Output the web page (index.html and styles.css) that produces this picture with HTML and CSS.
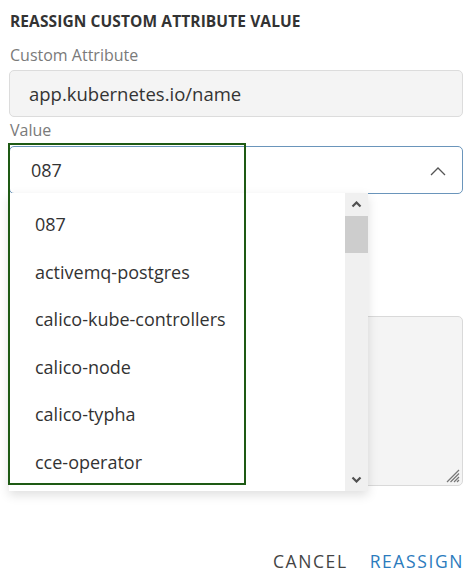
FILE: index.html
```html
<!DOCTYPE html>
<html>
<head>
<meta charset="utf-8">
<link rel="stylesheet" href="styles.css">
</head>
<body>
<div class="dialog">
  <h2 class="title">REASSIGN CUSTOM ATTRIBUTE VALUE</h2>
  <div class="field">
    <label class="label">Custom Attribute</label>
    <div class="input">app.kubernetes.io/name</div>
  </div>
  <div class="field field-value">
    <label class="label">Value</label>
    <div class="select">
      <span>087</span>
      <svg class="chev" width="16" height="10" viewBox="0 0 16 10"><polyline points="1,9 8,2 15,9" fill="none" stroke="#555" stroke-width="1.3"/></svg>
    </div>
    <div class="dropdown">
      <ul class="options">
        <li>087</li>
        <li>activemq-postgres</li>
        <li>calico-kube-controllers</li>
        <li>calico-node</li>
        <li>calico-typha</li>
        <li>cce-operator</li>
      </ul>
      <div class="scrollbar">
        <div class="sb-btn">
          <svg width="11" height="7" viewBox="0 0 11 7"><polyline points="1.5,5.5 5.5,1.5 9.5,5.5" fill="none" stroke="#505050" stroke-width="2.2"/></svg>
        </div>
        <div class="sb-thumb"></div>
        <div class="sb-track"></div>
        <div class="sb-btn">
          <svg width="11" height="7" viewBox="0 0 11 7"><polyline points="1.5,1.5 5.5,5.5 9.5,1.5" fill="none" stroke="#505050" stroke-width="2.2"/></svg>
        </div>
      </div>
    </div>
    <div class="highlight"></div>
  </div>
  <div class="field field-notes">
    <div class="notes-spacer"></div>
    <div class="textarea">
      <svg class="grip" width="14" height="14" viewBox="0 0 14 14"><g stroke="#777" stroke-width="1.2"><line x1="1" y1="13" x2="13" y2="1"/><line x1="4.5" y1="13" x2="13" y2="4.5"/><line x1="8" y1="13" x2="13" y2="8"/><line x1="11" y1="13" x2="13" y2="11"/></g></svg>
    </div>
  </div>
  <div class="actions">
    <button class="btn btn-cancel">CANCEL</button>
    <button class="btn btn-primary">REASSIGN</button>
  </div>
</div>
</body>
</html>
```
FILE: styles.css
```css
html, body {
  margin: 0;
  padding: 0;
  background: #fff;
}
body {
  font-family: "Open Sans", "Noto Sans", sans-serif;
  color: #333;
  width: 474px;
  height: 576px;
  overflow: hidden;
}
.dialog {
  padding: 10px 11px 0 9px;
}
.title {
  margin: 0 0 0 1px;
  font-size: 15.5px;
  font-weight: 700;
  line-height: 22px;
  color: #333;
  letter-spacing: 0.1px;
}
.field {
  display: flex;
  flex-direction: column;
}
.label {
  font-size: 16px;
  color: #7a7a7a;
  line-height: 20px;
  margin-left: 1px;
}
.field:first-of-type .label {
  margin-top: 13px;
  margin-bottom: 5px;
}
.input {
  height: 45px;
  border: 1px solid #dcdcdc;
  border-radius: 5px;
  background: #f4f4f4;
  font-size: 18.5px;
  line-height: 45px;
  padding-left: 19px;
  color: #333;
}
.field-value {
  position: relative;
}
.field-value .label {
  margin-top: 3px;
  margin-bottom: 6px;
}
.select {
  height: 46px;
  border: 1px solid #6a95bb;
  border-radius: 5px;
  background: #fff;
  display: flex;
  align-items: center;
  justify-content: space-between;
  padding: 0 16px 0 21px;
  font-size: 18px;
}
.chev {
  display: block;
  margin-top: 2px;
}
.dropdown {
  position: absolute;
  left: 0;
  top: 76px;
  width: 359px;
  height: 298px;
  background: #fff;
  box-shadow: 0 4px 10px rgba(0, 0, 0, 0.13);
  display: flex;
  z-index: 2;
}
.options {
  list-style: none;
  margin: 0;
  padding: 8px 0 0 0;
  flex: 1;
}
.options li {
  height: 47.6px;
  line-height: 47.6px;
  font-size: 18px;
  padding-left: 26px;
  color: #333;
}
.scrollbar {
  width: 23px;
  background: #f0f0f0;
  display: flex;
  flex-direction: column;
}
.sb-btn {
  height: 23px;
  display: flex;
  align-items: center;
  justify-content: center;
}
.sb-thumb {
  height: 37px;
  background: #cdcdcd;
}
.sb-track {
  flex: 1;
}
.highlight {
  position: absolute;
  left: -1px;
  top: 26px;
  width: 234px;
  height: 338px;
  border: 2px solid #1e5a14;
  z-index: 3;
  pointer-events: none;
}
.notes-spacer {
  height: 122px;
}
.textarea {
  position: relative;
  height: 168px;
  border: 1px solid #d9d9d9;
  border-radius: 5px;
  background: #f4f4f4;
}
.grip {
  position: absolute;
  right: 2px;
  bottom: 2px;
}
.actions {
  display: flex;
  justify-content: flex-end;
  gap: 22px;
  margin-top: 63px;
}
.btn {
  border: 0;
  background: none;
  padding: 0;
  font-family: "Open Sans", "Noto Sans", sans-serif;
  font-size: 17.5px;
  letter-spacing: 1.6px;
  line-height: 24px;
  cursor: pointer;
}
.btn-cancel {
  color: #444;
}
.btn-primary {
  color: #2b7bbd;
  margin-right: -1px;
}
```
